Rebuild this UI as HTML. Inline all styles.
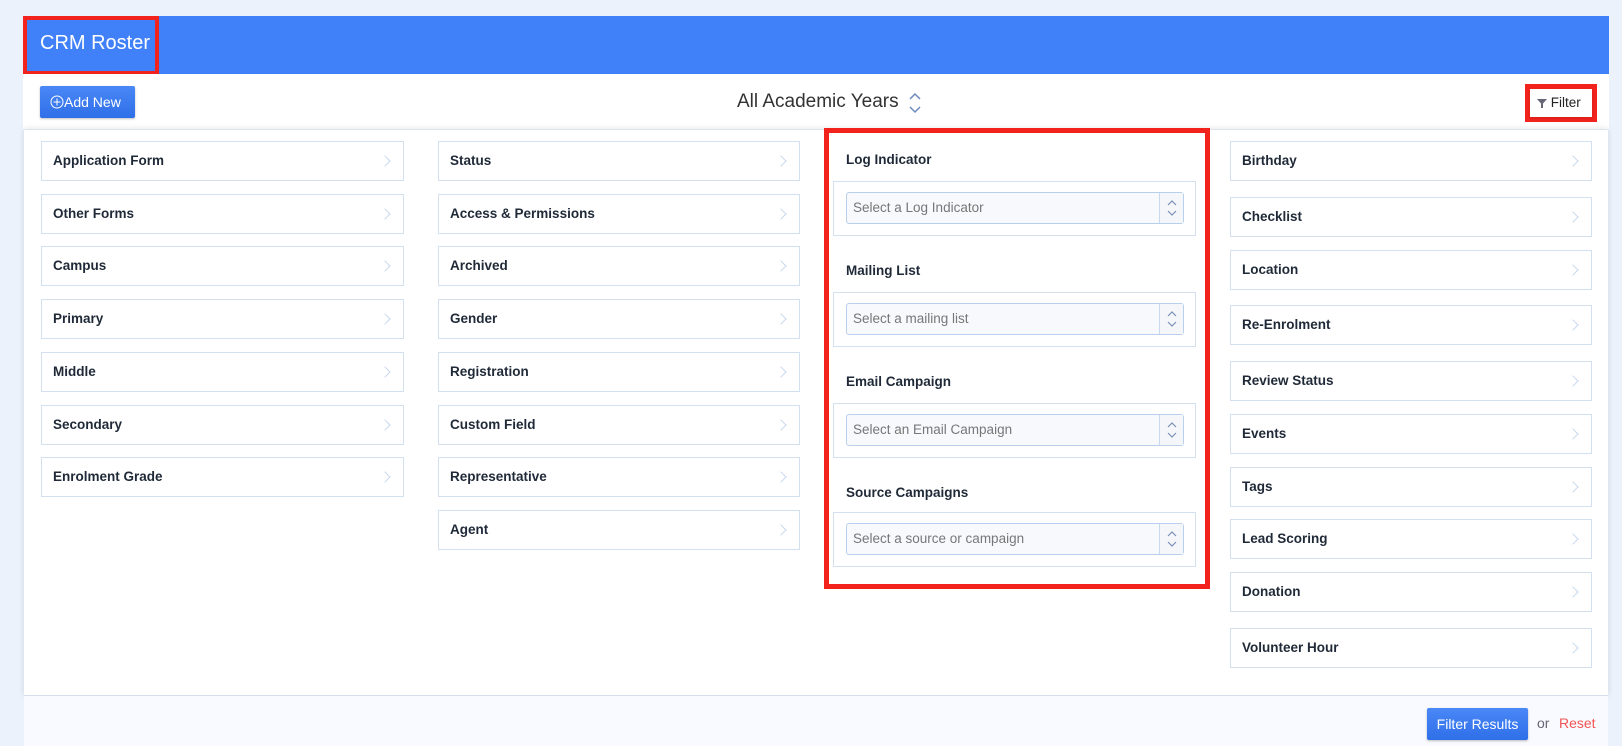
<!DOCTYPE html>
<html><head><meta charset="utf-8"><style>
*{box-sizing:border-box;margin:0;padding:0}
body{width:1622px;height:746px;background:#ebf2fc;font-family:"Liberation Sans",sans-serif;position:relative;overflow:hidden;color:#1f2937}
.a{position:absolute}
.hdr{left:23px;top:16px;width:1586px;height:58px;background:#4080f8}
.tb{left:23px;top:74px;width:1586px;height:55px;background:#fff}
.panel{left:24px;top:129px;width:1584px;height:566px;background:#fff;border-top:1px solid #dfe4ec;box-shadow:0 0 6px rgba(0,0,0,.12)}
.foot{left:24px;top:695px;width:1584px;height:51px;background:#f8faff;border-top:1px solid #d5dfec}
.row{position:absolute;height:40px;border:1px solid #d3e0f0;background:#fff;font-size:13.5px;font-weight:bold;color:#1f2937;padding-left:11px;line-height:38px}
.row:after{content:"";position:absolute;right:14px;top:15px;width:7px;height:7px;border-top:1.5px solid #c8d8ee;border-right:1.5px solid #c8d8ee;transform:rotate(45deg)}
.lbl{position:absolute;left:846px;font-size:13.5px;font-weight:bold;color:#1f2937}
.wrap{position:absolute;left:833px;width:363px;height:55px;border:1px solid #d3e0f0}
.sel{position:absolute;left:12px;top:10px;width:338px;height:32px;border:1px solid #b9cfee;border-radius:3px;background:#f7f9fc;font-size:13.5px;color:#777;line-height:30px;padding-left:6px}
.sel .ar{position:absolute;right:0;top:0;width:24px;height:30px;border-left:1px solid #c8d8ee;background:#f4f6fa}
</style></head><body>
<div class="a hdr"></div>
<div class="a" style="left:23px;top:16px;width:136px;height:59px;border:4px solid #f2231d"></div>
<div class="a" style="left:40px;top:32px;font-size:20px;color:#fff">CRM Roster</div>
<div class="a tb"></div>
<div class="a" style="left:40px;top:86px;width:95px;height:32px;background:linear-gradient(#4a88f7,#2f6fe8);border-radius:2px;box-shadow:0 1px 2px rgba(0,0,0,.25);color:#fff;font-size:14px;line-height:32px;padding-left:10px">
<svg width="14" height="14" style="vertical-align:-2px" viewBox="0 0 14 14"><circle cx="7" cy="7" r="6" fill="none" stroke="#fff" stroke-width="1"/><path d="M7 3.5v7M3.5 7h7" stroke="#fff" stroke-width="1"/></svg>Add New</div>
<div class="a" style="left:737px;top:91px;font-size:19px;color:#333">All Academic Years</div>
<svg class="a" style="left:908px;top:91px" width="14" height="24" viewBox="0 0 14 24"><path d="M2 8l5-5 5 5M2 16l5 5 5-5" fill="none" stroke="#6b8bbd" stroke-width="1.5"/></svg>
<div class="a" style="left:1525px;top:84px;width:72px;height:38px;border:5px solid #f2231d"></div>
<div class="a" style="left:1530px;top:89px;width:62px;height:28px;background:#fff;box-shadow:0 1px 3px rgba(0,0,0,.15);font-size:13.5px;color:#222;line-height:28px;padding-left:7px">
<svg width="10" height="10" viewBox="0 0 10 10" style="vertical-align:-1px"><path d="M0 1h10L6 5.5V10H4V5.5z" fill="#667"/></svg> Filter</div>
<div class="a panel"></div>
<div class="a foot"></div>

<div class="row" style="left:41px;top:141px;width:363px">Application Form</div>
<div class="row" style="left:41px;top:194px;width:363px">Other Forms</div>
<div class="row" style="left:41px;top:246px;width:363px">Campus</div>
<div class="row" style="left:41px;top:299px;width:363px">Primary</div>
<div class="row" style="left:41px;top:352px;width:363px">Middle</div>
<div class="row" style="left:41px;top:405px;width:363px">Secondary</div>
<div class="row" style="left:41px;top:457px;width:363px">Enrolment Grade</div>

<div class="row" style="left:438px;top:141px;width:362px">Status</div>
<div class="row" style="left:438px;top:194px;width:362px">Access &amp; Permissions</div>
<div class="row" style="left:438px;top:246px;width:362px">Archived</div>
<div class="row" style="left:438px;top:299px;width:362px">Gender</div>
<div class="row" style="left:438px;top:352px;width:362px">Registration</div>
<div class="row" style="left:438px;top:405px;width:362px">Custom Field</div>
<div class="row" style="left:438px;top:457px;width:362px">Representative</div>
<div class="row" style="left:438px;top:510px;width:362px">Agent</div>

<div class="a" style="left:824px;top:128px;width:386px;height:461px;border:5px solid #f2231d"></div>
<div class="lbl" style="top:152px">Log Indicator</div>
<div class="wrap" style="top:181px"><div class="sel">Select a Log Indicator<div class="ar"><svg width="24" height="30" viewBox="0 0 24 30"><path d="M8 12l4-4 4 4M8 18l4 4 4-4" fill="none" stroke="#7a90b5" stroke-width="1.2"/></svg></div></div></div>
<div class="lbl" style="top:263px">Mailing List</div>
<div class="wrap" style="top:292px"><div class="sel">Select a mailing list<div class="ar"><svg width="24" height="30" viewBox="0 0 24 30"><path d="M8 12l4-4 4 4M8 18l4 4 4-4" fill="none" stroke="#7a90b5" stroke-width="1.2"/></svg></div></div></div>
<div class="lbl" style="top:374px">Email Campaign</div>
<div class="wrap" style="top:403px"><div class="sel">Select an Email Campaign<div class="ar"><svg width="24" height="30" viewBox="0 0 24 30"><path d="M8 12l4-4 4 4M8 18l4 4 4-4" fill="none" stroke="#7a90b5" stroke-width="1.2"/></svg></div></div></div>
<div class="lbl" style="top:485px">Source Campaigns</div>
<div class="wrap" style="top:512px"><div class="sel">Select a source or campaign<div class="ar"><svg width="24" height="30" viewBox="0 0 24 30"><path d="M8 12l4-4 4 4M8 18l4 4 4-4" fill="none" stroke="#7a90b5" stroke-width="1.2"/></svg></div></div></div>

<div class="row" style="left:1230px;top:141px;width:362px">Birthday</div>
<div class="row" style="left:1230px;top:197px;width:362px">Checklist</div>
<div class="row" style="left:1230px;top:250px;width:362px">Location</div>
<div class="row" style="left:1230px;top:305px;width:362px">Re-Enrolment</div>
<div class="row" style="left:1230px;top:361px;width:362px">Review Status</div>
<div class="row" style="left:1230px;top:414px;width:362px">Events</div>
<div class="row" style="left:1230px;top:467px;width:362px">Tags</div>
<div class="row" style="left:1230px;top:519px;width:362px">Lead Scoring</div>
<div class="row" style="left:1230px;top:572px;width:362px">Donation</div>
<div class="row" style="left:1230px;top:628px;width:362px">Volunteer Hour</div>

<div class="a" style="left:1427px;top:708px;width:101px;height:32px;background:linear-gradient(#4a88f7,#2f6fe8);border-radius:2px;box-shadow:0 1px 2px rgba(0,0,0,.25);color:#fff;font-size:14px;line-height:32px;text-align:center">Filter Results</div>
<div class="a" style="left:1537px;top:715px;font-size:14px;color:#667">or</div>
<div class="a" style="left:1559px;top:715px;font-size:14px;color:#f25555">Reset</div>
</body></html>
